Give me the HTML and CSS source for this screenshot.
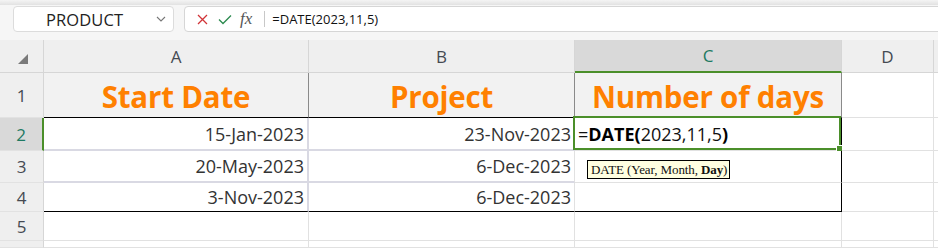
FILE: index.html
```html
<!DOCTYPE html>
<html>
<head>
<meta charset="utf-8">
<link rel="stylesheet" href="styles.css">
</head>
<body>
<div class="strip"></div>
<div class="bar">
  <div class="namebox">
    <span class="name">PRODUCT</span>
    <svg class="chev" width="10" height="6" viewBox="0 0 10 6"><polyline points="1,1 5,5 9,1" fill="none" stroke="#777" stroke-width="1.1"/></svg>
  </div>
  <div class="fbox">
    <svg class="ico" width="11" height="11" viewBox="0 0 11 11"><path d="M1,1 L10,10 M10,1 L1,10" stroke="#d13438" stroke-width="1.3" fill="none"/></svg>
    <svg class="ico ok" width="14" height="11" viewBox="0 0 14 11"><polyline points="1,5.5 5,9.5 13,1.5" fill="none" stroke="#2b8a4e" stroke-width="1.3"/></svg>
    <span class="fx">fx</span>
    <span class="sep"></span>
    <span class="ftext">=DATE(2023,11,5)</span>
  </div>
</div>
<div class="sheet">
  <div class="hd corner"><svg width="10" height="10" viewBox="0 0 10 10"><polygon points="10,0 10,10 0,10" fill="#7a7a7a"/></svg></div>
  <div class="hd col">A</div>
  <div class="hd col">B</div>
  <div class="hd col sel-col">C</div>
  <div class="hd col">D</div>
  <div class="hd col last"></div>

  <div class="hd row">1</div>
  <div class="c title tA">Start Date</div>
  <div class="c title tB">Project</div>
  <div class="c title tC">Number of days</div>
  <div class="c"></div>
  <div class="c last"></div>

  <div class="hd row sel-row">2</div>
  <div class="c num dA">15-Jan-2023</div>
  <div class="c num dB">23-Nov-2023</div>
  <div class="c active"><span class="edit">=<b>DATE(</b>2023,11,5<b>)</b></span><div class="selbox"><span class="handle"></span></div></div>
  <div class="c"></div>
  <div class="c last"></div>

  <div class="hd row">3</div>
  <div class="c num dA">20-May-2023</div>
  <div class="c num dB">6-Dec-2023</div>
  <div class="c dC"><div class="tip">DATE (Year, Month, <b>Day</b>)</div></div>
  <div class="c"></div>
  <div class="c last"></div>

  <div class="hd row">4</div>
  <div class="c num dA endrow">3-Nov-2023</div>
  <div class="c num dB endrow">6-Dec-2023</div>
  <div class="c dC endrow"></div>
  <div class="c"></div>
  <div class="c last"></div>

  <div class="hd row">5</div>
  <div class="c"></div>
  <div class="c"></div>
  <div class="c"></div>
  <div class="c"></div>
  <div class="c last"></div>

  <div class="hd row"></div>
  <div class="c"></div>
  <div class="c"></div>
  <div class="c"></div>
  <div class="c"></div>
  <div class="c last"></div>
</div>
</body>
</html>
```
FILE: styles.css
```css
* { box-sizing: border-box; }
body {
  margin: 0;
  width: 938px;
  height: 248px;
  overflow: hidden;
  background: #f0f0f0;
  font-family: "Open Sans", "Noto Sans", sans-serif;
}
.strip {
  height: 5px;
  background: linear-gradient(#f4f4f4, #e2e2e2);
}
.bar {
  display: flex;
  gap: 10px;
  padding: 1px 0 8px 13px;
  background: #f6f6f6;
  height: 35px;
}
.namebox {
  width: 161px;
  height: 26px;
  background: #fff;
  border: 1px solid #dcdcdc;
  border-radius: 4px;
  display: flex;
  align-items: center;
  padding-left: 32px;
  position: relative;
}
.name {
  font-size: 16.5px;
  color: #222;
  letter-spacing: 0.1px;
}
.chev {
  margin-left: auto;
  margin-right: 7px;
}
.fbox {
  flex: 1;
  margin-right: -12px;
  height: 26px;
  background: #fff;
  border: 1px solid #d6d6d6;
  border-radius: 4px;
  display: flex;
  align-items: center;
  padding-left: 12px;
}
.ico { display: block; }
.ok { margin-left: 10px; }
.fx {
  font-family: "Liberation Serif", serif;
  font-style: italic;
  font-size: 17px;
  color: #555;
  margin-left: 8px;
  line-height: 1;
  margin-top: -2px;
}
.sep {
  width: 1px;
  height: 16px;
  background: #c8c8c8;
  margin-left: 12px;
}
.ftext {
  margin-left: 7px;
  font-size: 13px;
  color: #111;
}
.sheet {
  display: grid;
  grid-template-columns: 44px 265px 266px 267px 92px 1fr;
  grid-template-rows: 33px 45px 33px 32px 29px 29px 1fr;
  height: 208px;
  background: #fff;
}
.hd {
  background: #efefef;
  color: #454a52;
  font-size: 17px;
  display: flex;
  align-items: center;
  justify-content: center;
}
.hd.col {
  border-right: 1px solid #d6d6d6;
  border-bottom: 1px solid #d6d6d6;
}
.hd.col.last { border-right: none; }
.hd.corner {
  border-right: 1px solid #d6d6d6;
  border-bottom: 1px solid #d6d6d6;
  justify-content: flex-start;
  padding-left: 18px;
  padding-top: 6px;
}
.hd.row {
  border-right: 1px solid #d6d6d6;
  border-bottom: 1px solid #e2e2e2;
}
.sel-col {
  background: #d9d9d9;
  color: #1e7a62;
  border-bottom: 2px solid #4b8f2a !important;
}
.sel-row {
  background: #d9d9d9;
  color: #1e7a62;
  border-right: 2px solid #4b8f2a !important;
}
.c {
  border-right: 1px solid #e1e1e1;
  border-bottom: 1px solid #e1e1e1;
  position: relative;
}
.c.last { border-right: none; }
.title {
  background: #f2f2f2;
  color: #ff8000;
  font-weight: 700;
  font-size: 29.5px;
  display: flex;
  align-items: center;
  justify-content: center;
  padding-top: 3px;
  border-bottom: 1px solid #000;
  border-right: 1px solid #8a8a8a;
  letter-spacing: -0.2px;
}
.num {
  font-size: 18px;
  color: #333;
  display: flex;
  align-items: center;
  justify-content: flex-end;
  padding-right: 3px;
}
.dA {
  border-right: 2px solid #d9d9e3;
  border-bottom: 2px solid #d9d9e3;
}
.dB {
  border-bottom: 2px solid #d9d9e3;
}
.dC {
  border-right: 1px solid #000;
}
.endrow {
  border-bottom: 1px solid #000;
}
.dA.endrow, .dB.endrow { border-bottom: 1px solid #000; }
.active {
  display: flex;
  align-items: center;
  padding-left: 3px;
  font-size: 18px;
  color: #111;
  border-right: 1px solid #000;
}
.active b { font-weight: 700; color: #000; }
.selbox {
  position: absolute;
  top: -2px;
  left: -2px;
  right: 0;
  bottom: 0;
  border: 2px solid #4b8f2a;
}
.handle {
  position: absolute;
  right: -4px;
  bottom: -4px;
  width: 7px;
  height: 7px;
  background: #4b8f2a;
  border: 1px solid #fff;
}
.tip {
  position: absolute;
  left: 12px;
  top: 9px;
  height: 19px;
  background: #ffffe1;
  border: 1px solid #000;
  font-family: "Liberation Serif", serif;
  font-size: 13px;
  letter-spacing: -0.1px;
  line-height: 17px;
  color: #111;
  padding: 0 2px 0 3px;
  white-space: nowrap;
}
```
